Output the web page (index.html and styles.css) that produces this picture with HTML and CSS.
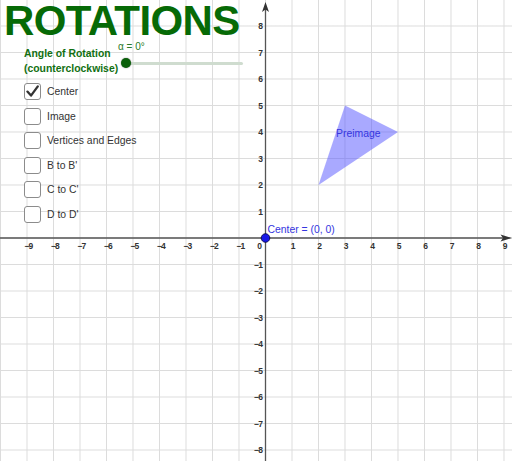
FILE: index.html
```html
<!DOCTYPE html>
<html>
<head>
<meta charset="utf-8">
<link rel="stylesheet" href="styles.css">
</head>
<body>
<div class="stage">
  <svg class="graph" width="512" height="461" viewBox="0 0 512 461" xmlns="http://www.w3.org/2000/svg">
    <defs>
      <pattern id="grid" x="26.5" y="25.5" width="26.5" height="26.5" patternUnits="userSpaceOnUse">
        <path d="M0 0.5H26.5M0.5 0V26.5" stroke="#dcdcdc" stroke-width="1" fill="none"/>
      </pattern>
    </defs>
    <rect width="512" height="461" fill="#fff"/>
    <rect width="512" height="461" fill="url(#grid)"/>
    <polygon class="tri" points="318.5,185 345,105.5 398,132"/>
    <line class="axis" x1="0" y1="238" x2="504" y2="238"/>
    <line class="axis" x1="265.5" y1="8" x2="265.5" y2="461"/>
    <polygon class="arrow" points="512,238 500.5,234.5 503,238 500.5,241.5"/>
    <polygon class="arrow" points="265.5,2 262,12 265.5,9.5 269,12"/>
    <g class="xt">
      <text x="28.5" y="249">−9</text><text x="55" y="249">−8</text><text x="81.5" y="249">−7</text>
      <text x="108" y="249">−6</text><text x="134.5" y="249">−5</text><text x="161" y="249">−4</text>
      <text x="187.5" y="249">−3</text><text x="214" y="249">−2</text><text x="240.5" y="249">−1</text>
      <text x="292.5" y="249">1</text><text x="319" y="249">2</text><text x="345.5" y="249">3</text>
      <text x="372" y="249">4</text><text x="398.5" y="249">5</text><text x="425" y="249">6</text>
      <text x="451.5" y="249">7</text><text x="478" y="249">8</text><text x="504.5" y="249">9</text>
      <text x="259" y="249">0</text>
    </g>
    <g class="yt">
      <text x="262" y="29">8</text><text x="262" y="55.5">7</text><text x="262" y="82">6</text>
      <text x="262" y="108.5">5</text><text x="262" y="135">4</text><text x="262" y="161.5">3</text>
      <text x="262" y="188">2</text><text x="262" y="214.5">1</text>
      <text x="262" y="267.5">−1</text><text x="262" y="294">−2</text><text x="262" y="320.5">−3</text>
      <text x="262" y="347">−4</text><text x="262" y="373.5">−5</text><text x="262" y="400">−6</text>
      <text x="262" y="426.5">−7</text><text x="262" y="453">−8</text>
    </g>
    <text class="lbl" x="336" y="136.8">Preimage</text>
    <text class="lbl" x="267.5" y="232.5">Center = (0, 0)</text>
    <circle class="pt" cx="265.5" cy="238" r="4.3"/>
  </svg>

  <div class="panel">
    <h1 class="title">ROTATIONS</h1>
    <div class="angle">
      <div class="angle-text">Angle of Rotation<br>(counterclockwise)</div>
      <div class="slider">
        <div class="slider-val">α = 0°</div>
        <div class="track">
          <div class="track-line"></div>
          <div class="knob"></div>
        </div>
      </div>
    </div>
    <ul class="checks">
      <li class="cb"><span class="box"><svg width="15" height="15" viewBox="0 0 15 15"><path d="M2.4 7.6 L6 11.6 L12.8 2.4" fill="none" stroke="#333" stroke-width="2.3" stroke-linecap="round" stroke-linejoin="round"/></svg></span>Center</li>
      <li class="cb"><span class="box"></span>Image</li>
      <li class="cb"><span class="box"></span>Vertices and Edges</li>
      <li class="cb"><span class="box"></span>B to B'</li>
      <li class="cb"><span class="box"></span>C to C'</li>
      <li class="cb"><span class="box"></span>D to D'</li>
    </ul>
  </div>
</div>
</body>
</html>
```
FILE: styles.css
```css
html, body {
  margin: 0;
  padding: 0;
  background: #fff;
}
body {
  font-family: "Liberation Sans", Arial, sans-serif;
}
.stage {
  position: relative;
  width: 512px;
  height: 461px;
  overflow: hidden;
}
.graph {
  display: block;
}
.tri {
  fill: #5a5aff;
  fill-opacity: 0.52;
  stroke: none;
}
.axis {
  stroke: #555;
  stroke-width: 1.3;
}
.arrow {
  fill: #333;
}
.xt text, .yt text {
  font-family: "Liberation Sans", Arial, sans-serif;
  font-size: 8.5px;
  font-weight: bold;
  letter-spacing: -1px;
  fill: #333;
}
.xt text {
  text-anchor: middle;
}
.yt text {
  text-anchor: end;
}
.lbl {
  font-family: "Liberation Sans", Arial, sans-serif;
  font-size: 10.4px;
  fill: #3535e0;
}
.pt {
  fill: #1818e6;
  stroke: #00003a;
  stroke-width: 0.8;
}
.panel {
  position: absolute;
  left: 0;
  top: 0;
  display: flex;
  flex-direction: column;
}
.title {
  margin: 0;
  padding-left: 4px;
  font-size: 42px;
  line-height: 42px;
  font-weight: bold;
  letter-spacing: -0.6px;
  color: #066a06;
}
.angle {
  display: flex;
  align-items: flex-start;
  padding-left: 24px;
}
.angle-text {
  width: 94px;
  padding-top: 3.5px;
  font-size: 10.4px;
  line-height: 15px;
  font-weight: bold;
  color: #127012;
}
.slider {
  display: flex;
  flex-direction: column;
  width: 126px;
}
.slider-val {
  font-size: 10px;
  line-height: 10px;
  color: #2a7a2a;
}
.track {
  position: relative;
  height: 14px;
}
.track-line {
  margin-left: 8px;
  margin-top: 9.5px;
  width: 117px;
  height: 3px;
  border-radius: 2px;
  background: #cfdccf;
}
.knob {
  position: absolute;
  left: 3px;
  top: 6px;
  width: 10px;
  height: 10px;
  border-radius: 50%;
  background: #0a5f0a;
  box-shadow: 0 0 1.5px rgba(0,0,0,0.5);
}
.checks {
  list-style: none;
  margin: 7.5px 0 0 0;
  padding: 0 0 0 24px;
  display: flex;
  flex-direction: column;
  gap: 7.6px;
}
.cb {
  display: flex;
  align-items: center;
  height: 17px;
  font-size: 10.4px;
  color: #333;
}
.box {
  box-sizing: border-box;
  width: 17px;
  height: 17px;
  margin-right: 6px;
  border: 1px solid #8c8c8c;
  border-radius: 3px;
  background: #fff;
  display: flex;
  align-items: center;
  justify-content: center;
}
.box svg {
  display: block;
}
```
